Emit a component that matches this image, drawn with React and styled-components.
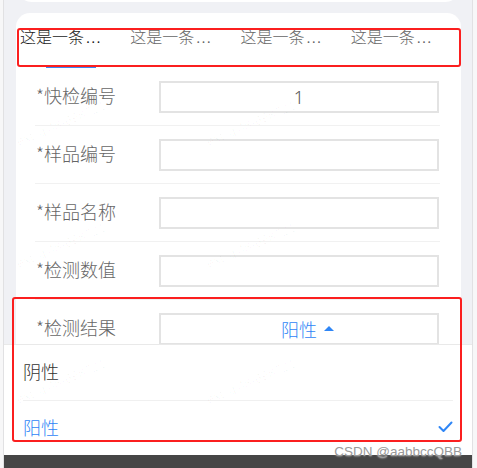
import React from "react";
import styled, { createGlobalStyle } from "styled-components";

const Global = createGlobalStyle`
  html, body { margin: 0; padding: 0; background: #f7f7f8; }
  body { font-family: "Noto Sans CJK SC", "Noto Sans", sans-serif; }
  * { box-sizing: border-box; }
`;

const Shell = styled.div`
  position: relative;
  width: 477px;
  height: 468px;
  overflow: hidden;
  background: #f7f7f8;
`;

const Frame = styled.div`
  display: flex;
  flex-direction: column;
  height: 100%;
  margin: 0 4px 0 3px;
  border-left: 1px solid #e1e1e3;
  border-right: 1px solid #e1e1e3;
  background: #f0f1f5;
`;

const Viewport = styled.div`
  position: relative;
  flex: 1;
  overflow: hidden;
`;

const PrevCardEdge = styled.div`
  height: 16px;
  margin: -14px 11px 0 12px;
  background: #fff;
  border-radius: 0 0 16px 16px;
`;

const Card = styled.div`
  margin: 11px 11px 0 12px;
  background: #fff;
  border-radius: 14px 14px 0 0;
  padding-bottom: 40px;
`;

const Tabs = styled.div`
  display: flex;
  align-items: center;
  height: 55px;
  padding: 0 0 0 4px;
`;

const Tab = styled.div`
  position: relative;
  width: 111px;
  height: 100%;
  display: flex;
  align-items: center;
  padding-bottom: 9px;
  font-size: 16px;
  font-weight: 300;
  white-space: nowrap;
  color: ${(p) => (p.$active ? "#1a1a1a" : "#666")};
`;

const Dots = styled.span`
  margin-left: 2px;
  letter-spacing: 1.3px;
`;

const TabLine = styled.span`
  position: absolute;
  left: 26px;
  bottom: 0;
  width: 50px;
  height: 2px;
  background: #3a86f3;
`;

const Row = styled.div`
  display: flex;
  align-items: center;
  height: 58px;
  margin: 0 21px 0 19px;
  border-bottom: 1px solid #f1f1f1;
`;

const Label = styled.div`
  width: 124px;
  padding-left: 1px;
  padding-bottom: 3px;
  font-size: 18px;
  font-weight: 300;
  color: #666;
`;

const Field = styled.div`
  position: relative;
  width: 280px;
  height: 32px;
  border: 2px solid #e3e3e3;
  display: flex;
  align-items: center;
  justify-content: center;
  font-family: "Noto Sans", "Noto Sans CJK SC", sans-serif;
  font-size: 18px;
  font-weight: 300;
  color: ${(p) => (p.$accent ? "#2f86f6" : "#555")};
`;

const SelectValue = styled.span`
  position: relative;
  font-family: "Noto Sans CJK SC", sans-serif;
  &::after {
    content: "";
    position: absolute;
    left: calc(100% + 7px);
    top: 50%;
    margin-top: -3px;
    border-left: 5px solid transparent;
    border-right: 5px solid transparent;
    border-bottom: 5px solid #2f86f6;
  }
`;

const Dropdown = styled.div`
  position: absolute;
  left: 0;
  right: 0;
  bottom: 0;
  height: 111px;
  background: #fff;
  border-top: 1px solid #e9e9e9;
  display: flex;
  flex-direction: column;
`;

const Option = styled.div`
  flex: 1;
  display: flex;
  align-items: center;
  justify-content: space-between;
  margin: 0 21px 0 19px;
  padding-bottom: 2px;
  font-size: 18px;
  font-weight: 300;
  color: ${(p) => (p.$selected ? "#2f86f6" : "#333")};
  & + & { border-top: 1px solid #f0f0f0; margin-right: 19px; }
`;

const BottomBar = styled.div`
  height: 13px;
  background: #464646;
`;

const Highlight = styled.div`
  position: absolute;
  left: ${(p) => p.$x}px;
  top: ${(p) => p.$y}px;
  width: ${(p) => p.$w}px;
  height: ${(p) => p.$h}px;
  border: 2px solid #fb1f1f;
  border-radius: 3px;
  pointer-events: none;
`;

const Mark = styled.div`
  position: absolute;
  font-family: "Liberation Sans", Arial, sans-serif;
  font-size: 13px;
  color: rgba(0, 0, 0, 0.03);
  transform: rotate(-23deg);
  transform-origin: left bottom;
  white-space: nowrap;
  pointer-events: none;
`;

const Credit = styled.div`
  position: absolute;
  right: 15px;
  bottom: 9px;
  font-family: "Liberation Sans", Arial, sans-serif;
  font-size: 13.5px;
  color: #9a9a9a;
  text-shadow: 0 0 2px #fff;
  pointer-events: none;
`;

const Check = () => (
  <svg width="15" height="12" viewBox="0 0 15 12" fill="none">
    <polyline points="1.5,6 5.5,10 13.5,1.5" stroke="#2f86f6" strokeWidth="2" strokeLinecap="round" strokeLinejoin="round" />
  </svg>
);

const fields = [
  { label: "*快检编号", value: "1" },
  { label: "*样品编号", value: "" },
  { label: "*样品名称", value: "" },
  { label: "*检测数值", value: "" },
];

const marks = [];
[134, 256, 392].forEach((y) => {
  [20, 210].forEach((x) => marks.push({ x, y }));
});

export default function App() {
  return (
    <Shell>
      <Global />
      <Frame>
        <Viewport>
          <PrevCardEdge />
          <Card>
            <Tabs>
              {[0, 1, 2, 3].map((i) => (
                <Tab key={i} $active={i === 0}>
                  这是一条<Dots>...</Dots>
                  {i === 0 && <TabLine />}
                </Tab>
              ))}
            </Tabs>
            {fields.map((f) => (
              <Row key={f.label}>
                <Label>{f.label}</Label>
                <Field>{f.value}</Field>
              </Row>
            ))}
            <Row>
              <Label>*检测结果</Label>
              <Field $accent>
                <SelectValue>阳性</SelectValue>
              </Field>
            </Row>
          </Card>
          <Dropdown>
            <Option>阴性</Option>
            <Option $selected>
              阳性
              <Check />
            </Option>
          </Dropdown>
        </Viewport>
        <BottomBar />
      </Frame>
      {marks.map((m, i) => (
        <Mark key={i} style={{ left: m.x, top: m.y }}>
          extliqi48-698721
        </Mark>
      ))}
      <Highlight $x={17} $y={28} $w={444} $h={39} />
      <Highlight $x={12} $y={297} $w={450} $h={145} />
      <Credit>CSDN @aabbccQBB</Credit>
    </Shell>
  );
}
